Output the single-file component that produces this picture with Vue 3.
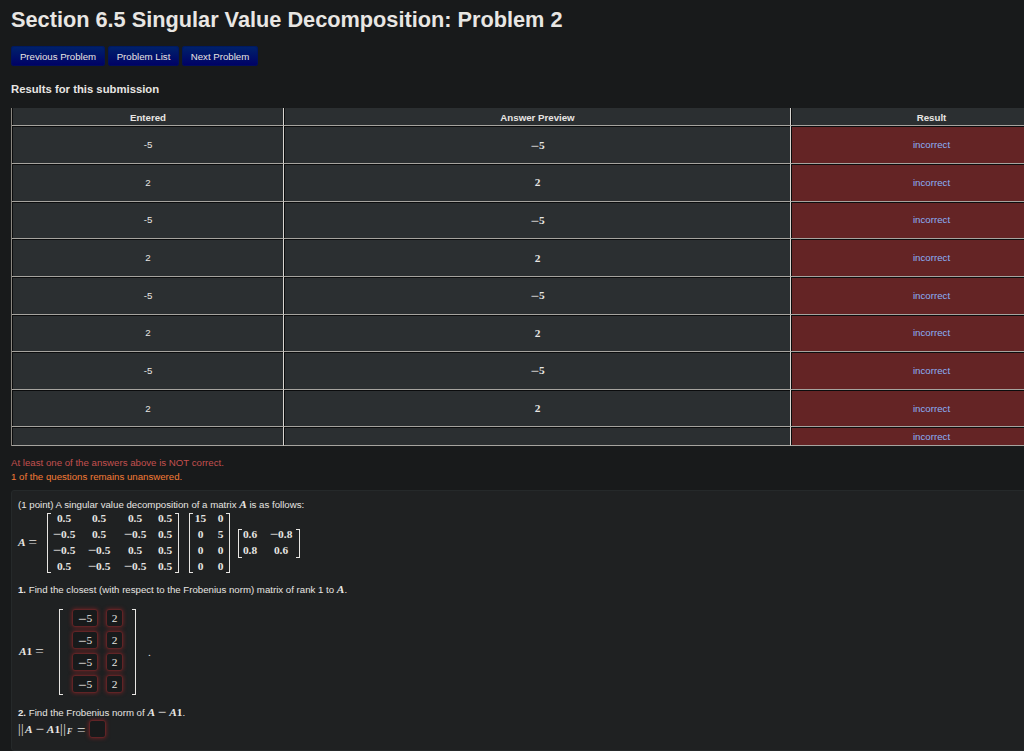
<template>
  <div class="page">
    <h1><span>Section 6.5 Singular Value Decomposition: Problem 2</span></h1>

    <nav class="nav">
      <a class="btn prev">Previous Problem</a>
      <a class="btn list">Problem List</a>
      <a class="btn next">Next Problem</a>
    </nav>

    <h3>Results for this submission</h3>

    <div class="results">
      <div class="row head">
        <div class="cell">Entered</div>
        <div class="cell">Answer Preview</div>
        <div class="cell">Result</div>
      </div>
      <div v-for="(value, i) in answers" :key="i" class="row" :class="{ empty: value === '' }">
        <div class="cell">{{ value }}</div>
        <div class="cell preview"><span v-if="isNegative(value)" class="op">−</span>{{ digits(value) }}</div>
        <div class="cell bad"><a>incorrect</a></div>
      </div>
    </div>

    <div class="messages">
      <div class="wrong">At least one of the answers above is NOT correct.</div>
      <div class="blank">1 of the questions remains unanswered.</div>
    </div>

    <main class="problem">
      <p class="intro">(1 point) A singular value decomposition of a matrix <i class="var">A</i> is as follows:</p>

      <div class="equation">
        <span class="lhs"><i>A</i> <span class="op">=</span></span>
        <div v-for="m in matrices" :key="m.name" class="matrix" :class="m.name">
          <span v-for="(n, i) in m.values" :key="i"><span v-if="isNegative(n)" class="op">−</span>{{ digits(n) }}</span>
        </div>
      </div>

      <p class="q1"><b>1.</b> Find the closest (with respect to the Frobenius norm) matrix of rank 1 to <i class="var">A</i>.</p>

      <div class="equation entry">
        <span class="lhs"><i>A</i>1 <span class="op">=</span></span>
        <div class="matrix inputs">
          <template v-for="r in 4" :key="r">
            <span class="field"><span class="op">−</span>5</span>
            <span class="field">2</span>
          </template>
        </div>
        <span class="dot">.</span>
      </div>

      <p class="q2"><b>2.</b> Find the Frobenius norm of <span class="var"><i>A</i> <span class="op">−</span> <i>A</i>1</span>.</p>
      <div class="norm">
        <span class="bars">||</span>
        <span><i>A</i> <span class="op">−</span> <i>A</i>1</span>
        <span class="bars">||</span>
        <sub>F</sub>
        <span class="op equals">=</span>
        <span class="field"></span>
      </div>
    </main>
  </div>
</template>

<script setup>
const answers = ['-5', '2', '-5', '2', '-5', '2', '-5', '2', '']

// math signs are drawn separately, wider and thinner than the digits
const isNegative = (value) => value.startsWith('-')
const digits = (value) => value.replace('-', '')

const matrices = [
  {
    name: 'u',
    values: [
      '0.5', '0.5', '0.5', '0.5',
      '-0.5', '0.5', '-0.5', '0.5',
      '-0.5', '-0.5', '0.5', '0.5',
      '0.5', '-0.5', '-0.5', '0.5',
    ],
  },
  { name: 's', values: ['15', '0', '0', '5', '0', '0', '0', '0'] },
  { name: 'v', values: ['0.6', '-0.8', '0.8', '0.6'] },
]
</script>

<style>
body {
  margin: 0;
  background: #181a1b;
  overflow: hidden;
}
</style>

<style scoped>
.page {
  box-sizing: border-box;
  width: 1024px;
  height: 751px;
  padding-left: 11px;
  overflow: hidden;
  background: #181a1b;
  color: #e8e6e3;
  font-family: "Liberation Sans", Arial, sans-serif;
  font-size: 9.66px;
  display: flex;
  flex-direction: column;
}

h1, h3, p {
  margin: 0;
  white-space: nowrap;
}

h1 {
  height: 46px;
  font-size: 21.72px;
  line-height: 39px;
}

.nav {
  display: flex;
  gap: 3px;
  height: 20px;
}

.btn {
  display: flex;
  align-items: center;
  justify-content: center;
  border-radius: 3px;
  background: linear-gradient(#00236b, #000066);
  box-shadow: inset 0 0 0 1px rgba(0, 20, 90, 0.6);
  white-space: nowrap;
}

.prev { width: 94px; }
.list { width: 71px; }
.next { width: 76px; }

h3 {
  height: 42px;
  font-size: 11.3px;
  line-height: 47px;
}

.results {
  width: 1060px;
  border-left: 1px solid #8b8780;
  font-size: 9.7px;
}

.row {
  display: grid;
  grid-template-columns: 272px 507px 281px;
  height: 37.65px;
}

.row.head {
  height: 18.3px;
  font-weight: bold;
}

.row.empty {
  height: 18.5px;
}

.cell {
  display: flex;
  align-items: center;
  justify-content: center;
  padding: 0 0 0 1px;
  background: #2b2f31;
  border-right: 1px solid #d8d5d0;
  border-bottom: 1px solid #a6a49f;
  box-shadow: inset 1px 1px 0 #0b0c0d;
}

.head .cell {
  padding-top: 1px;
  box-shadow: inset 1px 0 0 #0b0c0d;
}

.empty .cell {
  padding-top: 1px;
}

.preview {
  font: bold 11.4px "Liberation Serif", serif;
}

.bad {
  background: #642425;
  color: #8ab0f5;
}

.messages {
  height: 44.5px;
  box-sizing: border-box;
  padding-top: 10.5px;
  line-height: 14px;
}

.wrong { color: #c3504f; }
.blank { color: #f57b36; }

.problem {
  flex: 1;
  box-sizing: border-box;
  width: 1040px;
  padding: 7px 0 0 6px;
  border: 1px solid #25292a;
  border-radius: 3px;
  background: #1f2122;
}

.intro {
  height: 15px;
  line-height: 13px;
}

.var,
.equation,
.norm {
  font-family: "Liberation Serif", "Times New Roman", serif;
  font-weight: bold;
  font-size: 11.4px;
}

.var {
  line-height: 1;
}

.op {
  position: relative;
  top: 1px;
  font-size: 15px;
  font-weight: normal;
  line-height: 0;
}

.equation {
  display: flex;
  align-items: center;
  height: 60px;
}

.lhs {
  width: 29px;
  padding-bottom: 2px;
  white-space: nowrap;
}

.matrix {
  position: relative;
  display: grid;
  grid-auto-rows: 16px;
  align-items: center;
  justify-items: center;
  box-sizing: border-box;
  padding-bottom: 2px;
}

/* square brackets */
.matrix::before,
.matrix::after {
  content: "";
  position: absolute;
  top: 0;
  bottom: 0;
  width: 4px;
  border: 1px solid #e8e6e3;
  box-sizing: border-box;
}

.matrix::before {
  left: 0;
  border-right: 0;
}

.matrix::after {
  right: 0;
  border-left: 0;
}

.u {
  width: 132px;
  height: 60px;
  grid-template-columns: 34px 36px 36px 24px;
  align-content: center;
}

.s {
  width: 41px;
  height: 60px;
  margin-left: 10px;
  grid-template-columns: 23px 17px;
  align-content: center;
}

.v {
  width: 62px;
  height: 29px;
  margin-left: 8px;
  grid-template-columns: 24px 38px;
  align-content: center;
}

.q1 {
  height: 36px;
  line-height: 34px;
}

.entry {
  height: 86px;
}

.entry .lhs {
  width: 41px;
  padding-left: 1px;
  padding-bottom: 3px;
  box-sizing: border-box;
}

.inputs {
  width: 77px;
  height: 86px;
  padding-bottom: 2px;
  grid-template-columns: 26px 17px;
  grid-auto-rows: 22px;
  column-gap: 8px;
  justify-content: center;
  align-content: center;
}

.field {
  display: flex;
  align-items: center;
  justify-content: center;
  box-sizing: border-box;
  width: 100%;
  height: 18px;
  border: 1px solid #602426;
  border-radius: 3px;
  background: #181a1b;
  box-shadow: 0 0 4px #7a2224;
  font-weight: normal;
}

.dot {
  margin-left: 12px;
  font-weight: normal;
}

.q2 {
  height: 25px;
  line-height: 36px;
}

.norm {
  display: flex;
  align-items: center;
  height: 18px;
  white-space: nowrap;
}

.bars {
  width: 7px;
  font-size: 13px;
  font-weight: normal;
  letter-spacing: 0.5px;
}

.norm sub {
  width: 10px;
  padding-top: 5px;
  font-size: 8px;
  font-style: italic;
  vertical-align: baseline;
}

.norm .field {
  width: 17px;
}

.equals {
  width: 12px;
}
</style>
